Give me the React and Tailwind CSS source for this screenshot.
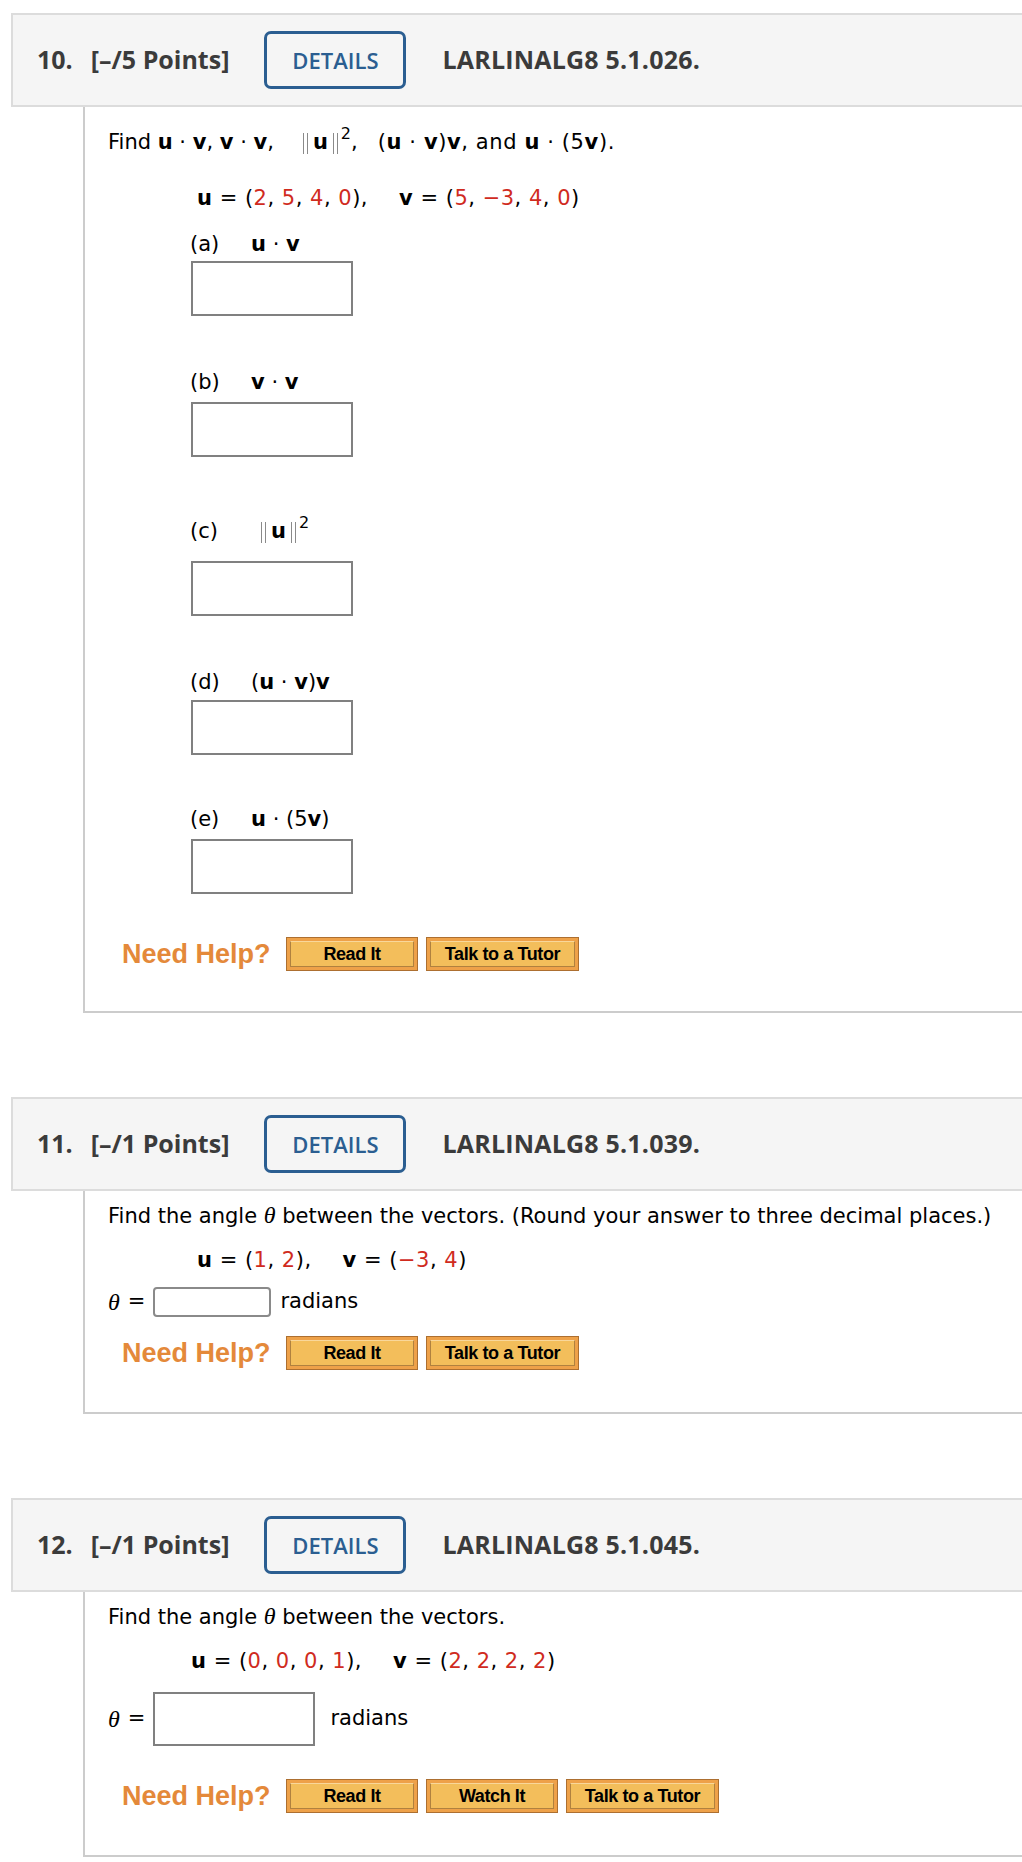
import React from 'react';

const body = { fontFamily: '"DejaVu Sans", Verdana, sans-serif' };
const head = { fontFamily: '"Open Sans", "Liberation Sans", sans-serif' };

function B({ children }) {
  return <span className="font-bold">{children}</span>;
}

function R({ children }) {
  return <span className="text-[#d02b1e]">{children}</span>;
}

function Theta() {
  return (
    <span className="italic text-[24px] leading-none" style={{ fontFamily: '"Liberation Serif", "Times New Roman", serif' }}>
      θ
    </span>
  );
}

// ||u||^2 drawn with thin bars like the rendered math
function Norm() {
  const bar = 'inline-block w-px h-[21px] bg-[#8a8a8a] align-[-5px]';
  return (
    <span className="whitespace-nowrap">
      <span className={bar} />
      <span className={`${bar} ml-[3px]`} />
      <span className="font-bold mx-[5px]">u</span>
      <span className={bar} />
      <span className={`${bar} ml-[3px]`} />
      <span className="relative -top-[10px] text-[16px] ml-[3px]">2</span>
    </span>
  );
}

function Header({ num, points, code }) {
  return (
    <div
      className="flex items-center h-[94px] pl-[24px] bg-[#f5f5f5] border-2 border-r-0 border-[#dcdcdc] text-[#3b3b3b]"
      style={head}
    >
      <span className="text-[25px] font-bold">{num}.</span>
      <span className="text-[25px] font-bold ml-[18px]">[–/{points} Points]</span>
      <div className="ml-[35px] w-[142px] h-[58px] rounded-[7px] border-[3px] border-[#2b5e91] flex items-center justify-center text-[22px] font-semibold text-[#2b5e91]">
        DETAILS
      </div>
      <span className="ml-[36px] text-[25px] font-bold tracking-[0.2px]">{code}</span>
    </div>
  );
}

function HelpBtn({ label, w }) {
  return (
    <div className={`h-[34px] ${w} border border-[#ad6f30] bg-[#eea149] p-[3px]`}>
      <div className="h-full border border-[#b0813f] border-t-[#f9d79a] bg-[#f3be5b] flex items-center justify-center">
        <span
          className="text-[18px] leading-none font-bold text-black tracking-[-0.4px]"
          style={{ fontFamily: '"Liberation Sans", Arial, sans-serif' }}
        >
          {label}
        </span>
      </div>
    </div>
  );
}

function NeedHelp({ watch }) {
  return (
    <div className="flex items-center h-[34px] ml-[14px]">
      <span
        className="text-[27px] leading-none font-bold text-[#e4893a] w-[164px]"
        style={{ fontFamily: '"Liberation Sans", Arial, sans-serif' }}
      >
        Need Help?
      </span>
      <HelpBtn label="Read It" w="w-[132px]" />
      {watch && (
        <div className="ml-[8px]">
          <HelpBtn label="Watch It" w="w-[132px]" />
        </div>
      )}
      <div className="ml-[8px]">
        <HelpBtn label="Talk to a Tutor" w="w-[153px]" />
      </div>
    </div>
  );
}

function Box({ className = '' }) {
  return <div className={`w-[162px] h-[55px] border-2 border-[#808080] bg-white ${className}`} />;
}

function Body({ children, className = '' }) {
  return (
    <div className={`ml-[72px] border-l-2 border-b-2 border-[#cccccc] pl-[23px] text-[21px] text-black ${className}`} style={body}>
      {children}
    </div>
  );
}

export default function App() {
  return (
    <div className="w-[1022px] overflow-hidden bg-white pb-[6px]">
      <div className="w-[1100px] ml-[11px] pt-[13px]">
        {/* question 10 */}
        <Header num="10" points="5" code="LARLINALG8 5.1.026." />
        <Body className="pt-[22px] pb-[40px]">
          <div className="h-[26px] leading-[26px] whitespace-nowrap">
            Find <B>u</B> · <B>v</B>, <B>v</B> · <B>v</B>,<span className="inline-block w-[29px]" />
            <Norm />,<span className="inline-block w-[20px]" />
            <span className="tracking-[0.6px]">
              (<B>u</B> · <B>v</B>)<B>v</B>, and <B>u</B> · (5<B>v</B>).
            </span>
          </div>
          <div className="h-[26px] leading-[26px] mt-[30px] ml-[89px] whitespace-nowrap tracking-[0.5px]">
            <B>u</B> = (<R>2</R>, <R>5</R>, <R>4</R>, <R>0</R>),
            <span className="inline-block w-[31px]" />
            <B>v</B> = (<R>5</R>, <R>−3</R>, <R>4</R>, <R>0</R>)
          </div>
          <div className="ml-[82px] mt-[20px]">
            <div className="h-[26px] leading-[26px] flex">
              <span className="w-[61px]">(a)</span>
              <span><B>u</B> · <B>v</B></span>
            </div>
            <Box className="mt-[4px] ml-px" />
          </div>
          <div className="ml-[82px] mt-[53px]">
            <div className="h-[26px] leading-[26px] flex">
              <span className="w-[61px]">(b)</span>
              <span><B>v</B> · <B>v</B></span>
            </div>
            <Box className="mt-[7px] ml-px" />
          </div>
          <div className="ml-[82px] mt-[61px]">
            <div className="h-[26px] leading-[26px] flex">
              <span className="w-[71px]">(c)</span>
              <Norm />
            </div>
            <Box className="mt-[17px] ml-px" />
          </div>
          <div className="ml-[82px] mt-[53px]">
            <div className="h-[26px] leading-[26px] flex">
              <span className="w-[61px]">(d)</span>
              <span>(<B>u</B> · <B>v</B>)<B>v</B></span>
            </div>
            <Box className="mt-[5px] ml-px" />
          </div>
          <div className="ml-[82px] mt-[51px]">
            <div className="h-[26px] leading-[26px] flex">
              <span className="w-[61px]">(e)</span>
              <span><B>u</B> · (5<B>v</B>)</span>
            </div>
            <Box className="mt-[7px] ml-px" />
          </div>
          <div className="mt-[43px]">
            <NeedHelp />
          </div>
        </Body>

        {/* question 11 */}
        <div className="mt-[84px]">
          <Header num="11" points="1" code="LARLINALG8 5.1.039." />
        </div>
        <Body className="pt-[12px] pb-[42px]">
          <div className="h-[26px] leading-[26px] whitespace-nowrap">
            Find the angle <Theta /> between the vectors. (Round your answer to three decimal places.)
          </div>
          <div className="h-[26px] leading-[26px] mt-[18px] ml-[89px] whitespace-nowrap tracking-[0.5px]">
            <B>u</B> = (<R>1</R>, <R>2</R>),
            <span className="inline-block w-[31px]" />
            <B>v</B> = (<R>−3</R>, <R>4</R>)
          </div>
          <div className="flex items-center mt-[14px] h-[30px]">
            <Theta />
            <span className="ml-[8px]">=</span>
            <div className="ml-[8px] w-[118px] h-[30px] rounded-[4px] border-2 border-[#8a8a8a] bg-white" />
            <span className="ml-[9px]">radians</span>
          </div>
          <div className="mt-[19px]">
            <NeedHelp />
          </div>
        </Body>

        {/* question 12 */}
        <div className="mt-[84px]">
          <Header num="12" points="1" code="LARLINALG8 5.1.045." />
        </div>
        <Body className="pt-[12px] pb-[42px]">
          <div className="h-[26px] leading-[26px] whitespace-nowrap">
            Find the angle <Theta /> between the vectors.
          </div>
          <div className="h-[26px] leading-[26px] mt-[18px] ml-[83px] whitespace-nowrap tracking-[0.5px]">
            <B>u</B> = (<R>0</R>, <R>0</R>, <R>0</R>, <R>1</R>),
            <span className="inline-block w-[31px]" />
            <B>v</B> = (<R>2</R>, <R>2</R>, <R>2</R>, <R>2</R>)
          </div>
          <div className="flex items-center mt-[18px] h-[54px]">
            <Theta />
            <span className="ml-[8px]">=</span>
            <div className="ml-[8px] w-[162px] h-[54px] border-2 border-[#808080] bg-white" />
            <span className="ml-[15px]">radians</span>
          </div>
          <div className="mt-[33px]">
            <NeedHelp watch />
          </div>
        </Body>
      </div>
    </div>
  );
}
